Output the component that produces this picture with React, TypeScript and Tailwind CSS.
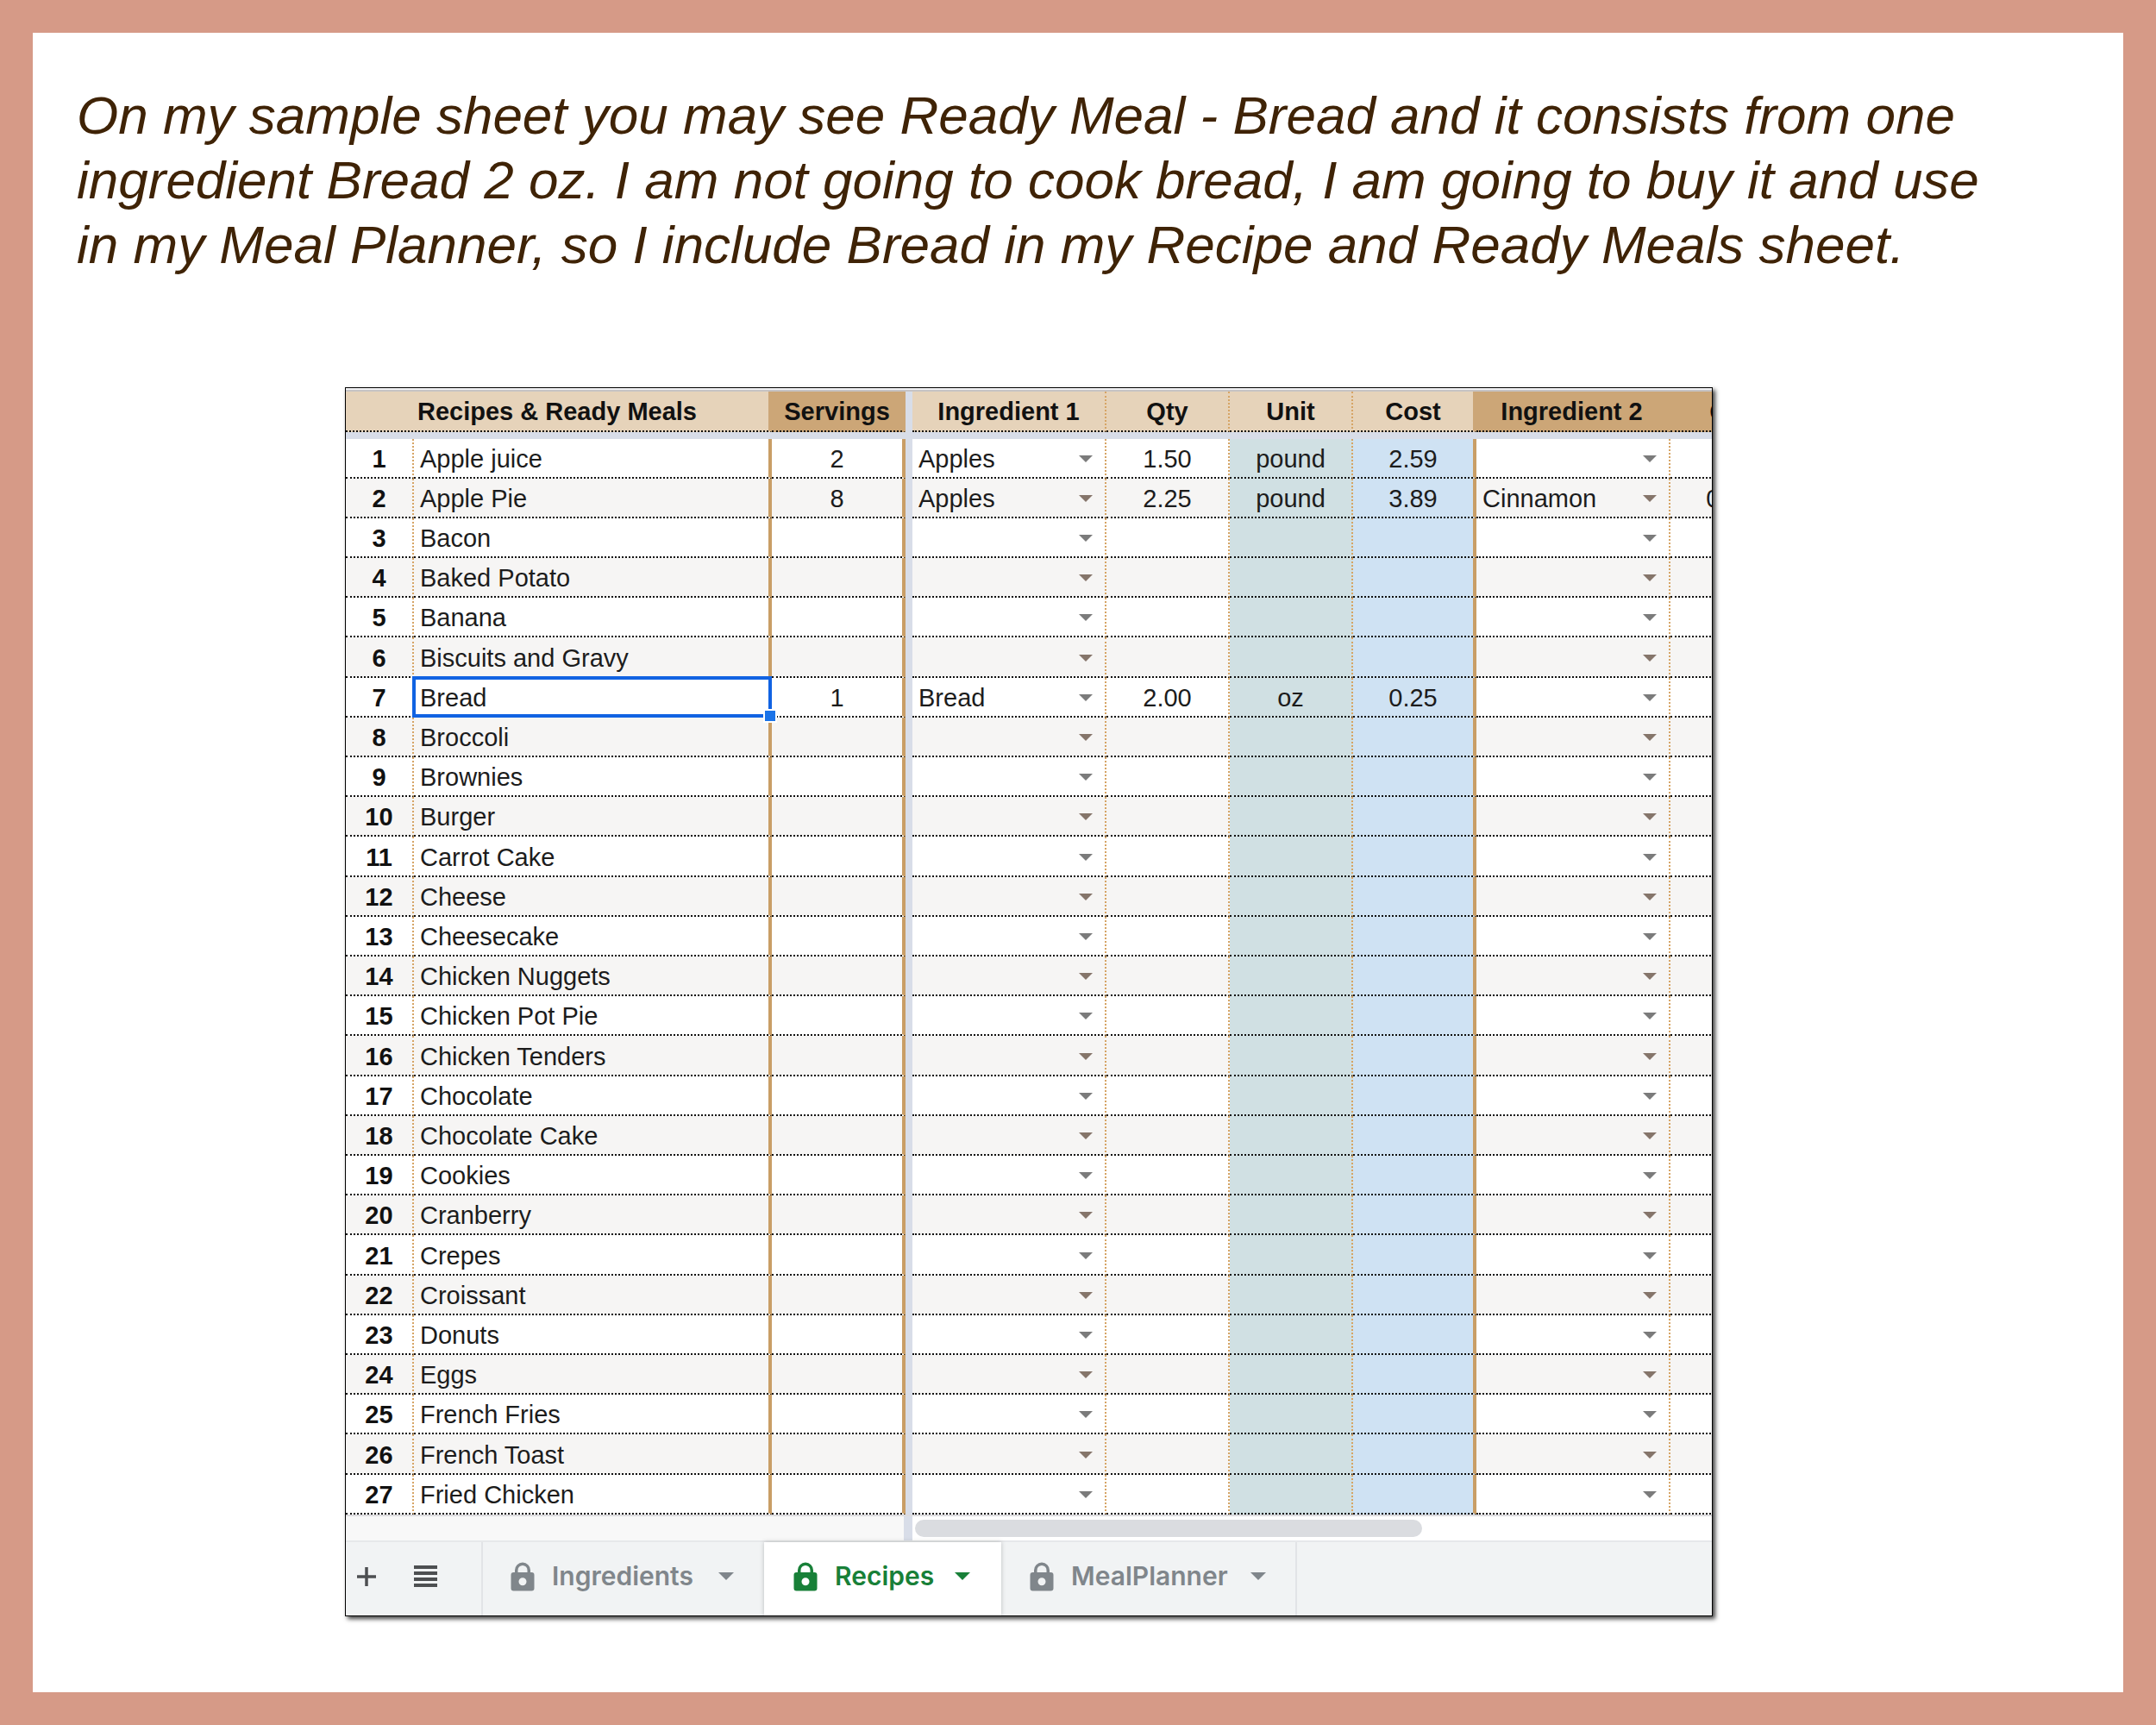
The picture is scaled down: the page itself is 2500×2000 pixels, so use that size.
import React from "react";

type Row = {
  name: string;
  servings?: string;
  first?: { item: string; qty: string; unit: string; cost: string };
  second?: { item: string; qty: string };
};

const rows: Row[] = [
  { name: "Apple juice", servings: "2", first: { item: "Apples", qty: "1.50", unit: "pound", cost: "2.59" } },
  {
    name: "Apple Pie",
    servings: "8",
    first: { item: "Apples", qty: "2.25", unit: "pound", cost: "3.89" },
    second: { item: "Cinnamon", qty: "0.25" },
  },
  { name: "Bacon" },
  { name: "Baked Potato" },
  { name: "Banana" },
  { name: "Biscuits and Gravy" },
  { name: "Bread", servings: "1", first: { item: "Bread", qty: "2.00", unit: "oz", cost: "0.25" } },
  { name: "Broccoli" },
  { name: "Brownies" },
  { name: "Burger" },
  { name: "Carrot Cake" },
  { name: "Cheese" },
  { name: "Cheesecake" },
  { name: "Chicken Nuggets" },
  { name: "Chicken Pot Pie" },
  { name: "Chicken Tenders" },
  { name: "Chocolate" },
  { name: "Chocolate Cake" },
  { name: "Cookies" },
  { name: "Cranberry" },
  { name: "Crepes" },
  { name: "Croissant" },
  { name: "Donuts" },
  { name: "Eggs" },
  { name: "French Fries" },
  { name: "French Toast" },
  { name: "Fried Chicken" },
];

const SELECTED = "Bread";

const head = "border-b-2 border-b-[#111111] [border-bottom-style:dotted] p-0";
const line = "border-b-2 border-b-[#111111] [border-bottom-style:dotted] px-0 pb-0 pt-[2px]";
const dotted = "border-r-2 border-r-[#d6a465] [border-right-style:dotted]";
const solid = "border-r-4 border-r-[#c99e66] [border-right-style:solid]";
const headEdge = "border-r-4 border-r-[#cca677] [border-right-style:solid]";

function Caret({ className }: { className: string }) {
  return (
    <svg viewBox="0 0 16 8" className={className} aria-hidden="true">
      <path d="M0 0h16L8 8z" fill="currentColor" />
    </svg>
  );
}

function Lock() {
  return (
    <svg viewBox="0 0 28 34" className="h-[34px] w-[28px] shrink-0" aria-hidden="true">
      <path
        fill="currentColor"
        fillRule="evenodd"
        d="M3.5 12H5V9.500a9 9 0 0 1 18 0V12h1.500a3 3 0 0 1 3 3v15.500a3 3 0 0 1-3 3h-21a3 3 0 0 1-3-3V15a3 3 0 0 1 3-3zM8.500 12h11V9.500a5.500 5.500 0 0 0-11 0zM14 18.300a4.500 4.500 0 1 0 0 9 4.500 4.500 0 0 0 0-9z"
      />
    </svg>
  );
}

function Choice({ value, label, striped }: { value?: string; label: string; striped: boolean }) {
  return (
    <div className="relative flex items-center">
      <select
        aria-label={label}
        defaultValue={value ?? ""}
        className="h-[42px] w-full appearance-none bg-transparent pl-[7px] pr-8 outline-none"
      >
        <option value=""></option>
        {value && <option value={value}>{value}</option>}
      </select>
      <Caret
        className={
          striped
            ? "pointer-events-none absolute right-[14px] h-2 w-4 text-[#85756a]"
            : "pointer-events-none absolute right-[14px] h-2 w-4 text-[#7b7b7b]"
        }
      />
    </div>
  );
}

function Sheet() {
  return (
    <table className="w-[1675px] table-fixed border-separate border-spacing-0 text-center text-[29px] leading-[42px] text-[#1c1c1c]">
      <colgroup>
        <col className="w-[79px]" />
        <col className="w-[415px]" />
        <col className="w-[155px]" />
        <col className="w-[8px]" />
        <col className="w-[225px]" />
        <col className="w-[143px]" />
        <col className="w-[143px]" />
        <col className="w-[143px]" />
        <col className="w-[225px]" />
        <col className="w-[139px]" />
      </colgroup>
      <thead>
        <tr className="h-[47px] bg-[#e6d3ba] text-[#111111]">
          <th colSpan={2} className={`${head} ${headEdge}`}>Recipes &amp; Ready Meals</th>
          <th className={`${head} ${headEdge} bg-[#cca677]`}>Servings</th>
          <td className="bg-[#d8dde8] p-0" />
          <th className={`${head} ${dotted}`}>Ingredient 1</th>
          <th className={`${head} ${dotted}`}>Qty</th>
          <th className={`${head} ${dotted}`}>Unit</th>
          <th className={`${head} ${headEdge}`}>Cost</th>
          <th className={`${head} ${headEdge} bg-[#cca677]`}>Ingredient 2</th>
          <th className={`${head} bg-[#cca677]`}>Qty</th>
        </tr>
        <tr className="h-[8px]" aria-hidden="true">
          <td colSpan={10} className="bg-[#d8dde8] p-0" />
        </tr>
      </thead>
      <tbody>
        {rows.map((row, i) => {
          const striped = i % 2 === 1;
          const selected = row.name === SELECTED;
          return (
            <tr
              key={row.name}
              className={`${i > 0 && i % 5 === 0 ? "h-[47px]" : "h-[46px]"} ${striped ? "bg-[#f6f5f4]" : "bg-white"}`}
            >
              <th scope="row" className={`${line} ${dotted} text-[#111111]`}>{i + 1}</th>
              <td className={`${line} ${solid} relative text-left`}>
                <span className="pl-[7px]">{row.name}</span>
                {selected && (
                  <span className="absolute -bottom-[2px] -left-[2px] -right-[4px] -top-[2px] z-10 border-4 border-[#1163e2]">
                    <span className="absolute -bottom-[10px] -right-[10px] size-[16px] border-2 border-white bg-[#1a73e8]" />
                  </span>
                )}
              </td>
              <td className={`${line} ${solid}`}>{row.servings}</td>
              <td className="bg-[#d8dde8] p-0" />
              <td className={`${line} ${dotted} text-left`}>
                <Choice value={row.first?.item} label={`${row.name}, ingredient 1`} striped={striped} />
              </td>
              <td className={`${line} ${dotted}`}>{row.first?.qty}</td>
              <td className={`${line} ${dotted} bg-[#d0e0e3]`}>{row.first?.unit}</td>
              <td className={`${line} ${solid} bg-[#cfe2f3]`}>{row.first?.cost}</td>
              <td className={`${line} ${dotted} text-left`}>
                <Choice value={row.second?.item} label={`${row.name}, ingredient 2`} striped={striped} />
              </td>
              <td className={line}>{row.second?.qty}</td>
            </tr>
          );
        })}
      </tbody>
    </table>
  );
}

function Tab({ label, active, className }: { label: string; active?: boolean; className: string }) {
  return (
    <button
      role="tab"
      aria-selected={!!active}
      className={`flex shrink-0 items-center whitespace-nowrap pb-[6px] font-[Inter,sans-serif] text-[30px] font-semibold ${className}`}
    >
      <Lock />
      <span className="flex-1 pl-[20px] text-left">{label}</span>
      <Caret className="h-[9px] w-[18px] shrink-0" />
    </button>
  );
}

export default function App() {
  return (
    <main className="min-h-screen border-[38px] border-[#d69a87] bg-white pb-[88px] font-['Liberation_Sans',Arial,sans-serif]">
      <p className="pl-[51px] pr-[100px] pt-[58px] text-[62px] italic leading-[75px] text-[#3f2306]">
        On my sample sheet you may see Ready Meal - Bread and it consists from one
        <br />
        ingredient Bread 2 oz. I am not going to cook bread, I am going to buy it and use
        <br />
        in my Meal Planner, so I include Bread in my Recipe and Ready Meals sheet.
      </p>

      <section
        aria-label="Recipes sheet"
        className="ml-[362px] mt-[128px] max-w-[1586px] overflow-hidden border border-black bg-white shadow-[3px_3px_5px_rgba(0,0,0,0.75)]"
      >
        <div className="h-1 border-b-2 border-[#c6c3c4] bg-[#f3f3f5]" />
        <div className="overflow-hidden">
          <Sheet />
        </div>

        <div className="flex h-[30px] border-t-2 border-[#dcdbde]">
          <div className="w-[647px] shrink-0 bg-[#f8f8f8]" />
          <div className="w-[10px] shrink-0 bg-[#d8dde8]" />
          <div className="flex flex-1 items-center pl-[3px]">
            <div className="h-5 w-[588px] rounded-full bg-[#dadce0]" />
          </div>
        </div>

        <div className="flex h-[87px] border-t-2 border-[#e6e8ea] bg-[#f1f3f4]">
          <div className="flex w-[157px] shrink-0 items-center pb-[6px] pl-[13px] text-[#4d4f51]">
            <button aria-label="Add sheet">
              <svg viewBox="0 0 22 22" className="size-[22px]" aria-hidden="true">
                <path d="M9.250 0h3.500v9.250H22v3.500h-9.250V22h-3.500v-9.250H0v-3.500h9.250z" fill="currentColor" />
              </svg>
            </button>
            <button aria-label="All sheets" className="ml-[44px]">
              <svg viewBox="0 0 27 25" className="h-[25px] w-[27px]" aria-hidden="true">
                <path d="M0 0h27v4H0zM0 7h27v4H0zM0 14h27v4H0zM0 21h27v4H0z" fill="currentColor" />
              </svg>
            </button>
          </div>
          <div role="tablist" className="flex">
            <Tab label="Ingredients" className="w-[328px] border-l-2 border-[#e2e4e7] pl-[32px] pr-[35px] text-[#80868b]" />
            <Tab
              label="Recipes"
              active
              className="w-[275px] bg-white pl-[34px] pr-[36px] text-[#188038] shadow-[0_0_5px_rgba(60,64,67,0.3)]"
            />
            <Tab label="MealPlanner" className="w-[343px] border-r-2 border-[#e2e4e7] pl-[33px] pr-[34px] text-[#80868b]" />
          </div>
        </div>
      </section>
    </main>
  );
}
